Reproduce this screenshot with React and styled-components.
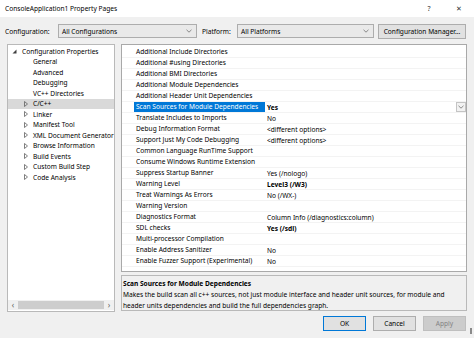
import React from "react";
import styled, { createGlobalStyle } from "styled-components";

const GlobalStyle = createGlobalStyle`
  html, body {
    margin: 0;
    padding: 0;
    background: #f0f0f0;
  }
  body {
    font-family: "Noto Sans", "Open Sans", sans-serif;
    font-size: 6.6px;
    color: #000;
  }
`;

const treeItems = [
  { label: "Configuration Properties", level: 0, twisty: "open" },
  { label: "General", level: 1 },
  { label: "Advanced", level: 1 },
  { label: "Debugging", level: 1 },
  { label: "VC++ Directories", level: 1 },
  { label: "C/C++", level: 1, twisty: "closed", selected: true },
  { label: "Linker", level: 1, twisty: "closed" },
  { label: "Manifest Tool", level: 1, twisty: "closed" },
  { label: "XML Document Generator", level: 1, twisty: "closed" },
  { label: "Browse Information", level: 1, twisty: "closed" },
  { label: "Build Events", level: 1, twisty: "closed" },
  { label: "Custom Build Step", level: 1, twisty: "closed" },
  { label: "Code Analysis", level: 1, twisty: "closed" },
];

const props = [
  ["Additional Include Directories", ""],
  ["Additional #using Directories", ""],
  ["Additional BMI Directories", ""],
  ["Additional Module Dependencies", ""],
  ["Additional Header Unit Dependencies", ""],
  ["Scan Sources for Module Dependencies", "Yes", true, true],
  ["Translate Includes to Imports", "No"],
  ["Debug Information Format", "<different options>"],
  ["Support Just My Code Debugging", "<different options>"],
  ["Common Language RunTime Support", ""],
  ["Consume Windows Runtime Extension", ""],
  ["Suppress Startup Banner", "Yes (/nologo)"],
  ["Warning Level", "Level3 (/W3)", true],
  ["Treat Warnings As Errors", "No (/WX-)"],
  ["Warning Version", ""],
  ["Diagnostics Format", "Column Info (/diagnostics:column)"],
  ["SDL checks", "Yes (/sdl)", true],
  ["Multi-processor Compilation", ""],
  ["Enable Address Sanitizer", "No"],
  ["Enable Fuzzer Support (Experimental)", "No"],
];

const Chevron = () => (
  <svg width="6" height="4" viewBox="0 0 6 4">
    <polyline points="0.5,0.8 3,3.2 5.5,0.8" fill="none" stroke="#707070" strokeWidth="0.8" />
  </svg>
);

const OpenTwisty = () => (
  <svg width="5" height="5" viewBox="0 0 5 5">
    <polygon points="4.5,0.5 4.5,4.5 0.5,4.5" fill="#404040" />
  </svg>
);

const ClosedTwisty = () => (
  <svg width="4" height="6" viewBox="0 0 4 6">
    <polygon points="0.5,0.5 3.5,3 0.5,5.5" fill="none" stroke="#606060" strokeWidth="0.8" />
  </svg>
);

const App = () => {
  return (
    <Window>
      <GlobalStyle />
      <TitleBar>
        <Title>ConsoleApplication1 Property Pages</Title>
        <TitleBtn>?</TitleBtn>
        <TitleBtn>✕</TitleBtn>
      </TitleBar>

      <ConfigRow>
        <Label $w={53}>Configuration:</Label>
        <Combo $w={139}>
          <span>All Configurations</span>
          <Chevron />
        </Combo>
        <Label $w={35} $ml={5}>Platform:</Label>
        <Combo $w={137}>
          <span>All Platforms</span>
          <Chevron />
        </Combo>
        <Button $w={88} $ml={4}>Configuration Manager...</Button>
      </ConfigRow>

      <Main>
        <Tree>
          <TreeList>
            {treeItems.map((item) => (
              <TreeRow key={item.label} $level={item.level} $selected={item.selected}>
                <Twisty>
                  {item.twisty === "open" && <OpenTwisty />}
                  {item.twisty === "closed" && <ClosedTwisty />}
                </Twisty>
                <TreeLabel>{item.label}</TreeLabel>
              </TreeRow>
            ))}
          </TreeList>
          <HScroll>
            <ScrollArrow>‹</ScrollArrow>
            <ScrollThumb />
            <ScrollArrow>›</ScrollArrow>
          </HScroll>
        </Tree>

        <RightCol>
          <Grid>
            {props.map(([name, value, bold, selected]) => (
              <PropRow key={name}>
                <Margin />
                <NameCell $selected={selected}>{name}</NameCell>
                <ValueCell $bold={bold}>
                  <span>{value}</span>
                  {selected && (
                    <DropBtn>
                      <Chevron />
                    </DropBtn>
                  )}
                </ValueCell>
              </PropRow>
            ))}
          </Grid>
          <Description>
            <DescTitle>Scan Sources for Module Dependencies</DescTitle>
            <DescText>
              Makes the build scan all c++ sources, not just module interface and header unit sources, for module and
              <br />
              header units dependencies and build the full dependencies graph.
            </DescText>
          </Description>
        </RightCol>
      </Main>

      <Footer>
        <Button $w={43} $default>OK</Button>
        <Button $w={43} $ml={7}>Cancel</Button>
        <Button $w={43} $ml={7} $disabled>Apply</Button>
        <Grip />
      </Footer>
    </Window>
  );
};

export default App;

const Window = styled.div`
  width: 474px;
  height: 338px;
  display: flex;
  flex-direction: column;
  background: #f0f0f0;
  overflow: hidden;
`;

const TitleBar = styled.div`
  height: 17px;
  background: #fff;
  display: flex;
  align-items: center;
  padding-left: 5px;
`;

const Title = styled.div`
  flex: 1;
`;

const TitleBtn = styled.div`
  width: 30px;
  text-align: center;
  font-size: 7px;
  color: #333;
`;

const ConfigRow = styled.div`
  display: flex;
  align-items: center;
  margin-top: 7px;
  padding-left: 5px;
  height: 14px;
`;

const Label = styled.div`
  width: ${(p) => p.$w}px;
  margin-left: ${(p) => p.$ml || 0}px;
  flex-shrink: 0;
`;

const Combo = styled.div`
  box-sizing: border-box;
  width: ${(p) => p.$w}px;
  height: 14px;
  border: 1px solid #adadad;
  background: #e9e9e9;
  display: flex;
  align-items: center;
  justify-content: space-between;
  padding: 0 4px 0 3px;
`;

const Button = styled.div`
  box-sizing: border-box;
  width: ${(p) => p.$w}px;
  height: 15px;
  margin-left: ${(p) => p.$ml || 0}px;
  display: flex;
  align-items: center;
  justify-content: center;
  background: ${(p) => (p.$disabled ? "#cccccc" : "#e1e1e1")};
  border: 1px solid ${(p) => (p.$default ? "#0078d7" : p.$disabled ? "#bfbfbf" : "#adadad")};
  color: ${(p) => (p.$disabled ? "#838383" : "#000")};
`;

const Main = styled.div`
  display: flex;
  gap: 6px;
  margin-top: 6px;
  padding-left: 7px;
  height: 268px;
`;

const Tree = styled.div`
  box-sizing: border-box;
  width: 108px;
  border: 1px solid #b9b9b9;
  background: #fff;
  display: flex;
  flex-direction: column;
`;

const TreeList = styled.div`
  flex: 1;
  padding-top: 1px;
  overflow: hidden;
`;

const TreeRow = styled.div`
  display: flex;
  align-items: center;
  height: 10.5px;
  padding-left: ${(p) => (p.$level === 0 ? 2 : 13)}px;
  background: ${(p) => (p.$selected ? "#d9d9d9" : "transparent")};
  white-space: nowrap;
`;

const Twisty = styled.span`
  width: 9px;
  display: flex;
  justify-content: center;
  align-items: center;
  flex-shrink: 0;
`;

const TreeLabel = styled.span`
  margin-left: 3px;
`;

const HScroll = styled.div`
  height: 10px;
  margin-bottom: 1px;
  display: flex;
  align-items: center;
  background: #f0f0f0;
`;

const ScrollArrow = styled.div`
  width: 10px;
  text-align: center;
  font-size: 8px;
  line-height: 10px;
  color: #606060;
`;

const ScrollThumb = styled.div`
  flex: 1;
  height: 8px;
  background: #cdcdcd;
`;

const RightCol = styled.div`
  width: 346px;
  display: flex;
  flex-direction: column;
  gap: 3px;
`;

const Grid = styled.div`
  box-sizing: border-box;
  height: 228px;
  padding-top: 2px;
  border: 1px solid #a9a9a9;
  background: #fff;
`;

const PropRow = styled.div`
  box-sizing: border-box;
  display: grid;
  grid-template-columns: 12px 131px 1fr;
  height: 11px;
  border-bottom: 1px solid #f3f3f3;
  white-space: nowrap;
`;

const Margin = styled.div``;

const NameCell = styled.div`
  padding-left: 2px;
  line-height: 10px;
  background: ${(p) => (p.$selected ? "#0078d7" : "transparent")};
  color: ${(p) => (p.$selected ? "#fff" : "#000")};
  overflow: hidden;
`;

const ValueCell = styled.div`
  display: flex;
  align-items: center;
  justify-content: space-between;
  padding-left: 2px;
  font-weight: ${(p) => (p.$bold ? 700 : 400)};
`;

const DropBtn = styled.div`
  box-sizing: border-box;
  width: 10px;
  height: 10px;
  border: 1px solid #c4c4c4;
  background: #f2f2f2;
  display: flex;
  align-items: center;
  justify-content: center;
`;

const Description = styled.div`
  box-sizing: border-box;
  height: 36px;
  border: 1px solid #b9b9b9;
  background: #f0f0f0;
  padding: 2px 0 0 1px;
  line-height: 11px;
`;

const DescTitle = styled.div`
  font-weight: 700;
`;

const DescText = styled.div``;

const Footer = styled.div`
  display: flex;
  align-items: center;
  justify-content: flex-end;
  margin-top: 4px;
  padding-right: 8px;
  position: relative;
`;

const Grip = styled.div`
  position: absolute;
  right: 2px;
  top: 12px;
  width: 2px;
  height: 6px;
  background: #8a8a8a;
`;
